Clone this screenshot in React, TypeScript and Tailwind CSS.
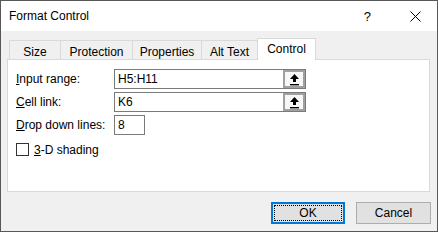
const font = { fontFamily: '"Liberation Sans", Arial, sans-serif' };

function RefButton() {
  return (
    <div className="flex h-full w-[22px] shrink-0 items-center justify-center border-2 border-[#a0a0a0] bg-[#f7f7f7]">
      <svg width="11" height="13" viewBox="0 0 11 13">
        <path d="M5.5 1 L10 6 L7 6 L7 9 L4 9 L4 6 L1 6 Z" fill="#000" />
        <rect x="1" y="11" width="9" height="1.4" fill="#000" />
      </svg>
    </div>
  );
}

function Tab({ label, first, selected }: { label: string; first?: boolean; selected?: boolean }) {
  if (selected) {
    return (
      <div className="relative z-10 -mb-px flex h-[22px] w-[59px] items-start justify-center border-x border-t border-[#d9d9d9] bg-white pt-[4px]">
        {label}
      </div>
    );
  }
  return (
    <div
      className={`mt-[2px] flex h-[19px] items-center justify-center border-t border-[#d9d9d9] pt-[3px] ${first ? "border-l" : "border-l"}`}
    >
      {label}
    </div>
  );
}

export default function App() {
  return (
    <div
      className="flex h-[232px] w-[438px] flex-col border border-[#575757] bg-[#f0f0f0] text-[12px] leading-none text-black"
      style={font}
    >
      {/* title bar */}
      <div className="flex h-[30px] shrink-0 items-center bg-white pl-[8px]">
        <span className="text-[12px]">Format Control</span>
        <span className="ml-auto mr-[39px] text-[13px]">?</span>
        <svg className="mr-[16px]" width="11" height="11" viewBox="0 0 11 11">
          <path d="M0.5 0.5 L10.5 10.5 M10.5 0.5 L0.5 10.5" stroke="#000" strokeWidth="1" />
        </svg>
      </div>

      <div className="flex flex-1 flex-col pl-[6px] pr-[6px] pt-[7px]">
        {/* tabs */}
        <div className="ml-[2px] flex">
          <div className="w-[51px]"><Tab label="Size" first /></div>
          <div className="w-[72px]"><Tab label="Protection" /></div>
          <div className="w-[69px]"><Tab label="Properties" /></div>
          <div className="w-[56px]"><Tab label="Alt Text" /></div>
          <Tab label="Control" selected />
        </div>

        {/* panel */}
        <div className="flex h-[133px] w-[423px] flex-col border border-[#d9d9d9] bg-white pl-[8px] pt-[9px]">
          <div className="flex flex-col gap-[3px]">
            <div className="flex h-[20px] items-center">
              <span className="w-[98px]"><u>I</u>nput range:</span>
              <div className="flex h-[20px] w-[192px] items-center border border-[#7a7a7a] pl-[3px]">
                <span className="flex-1">H5:H11</span>
                <RefButton />
              </div>
            </div>
            <div className="flex h-[20px] items-center">
              <span className="w-[98px]"><u>C</u>ell link:</span>
              <div className="flex h-[20px] w-[192px] items-center border border-[#7a7a7a] pl-[3px]">
                <span className="flex-1">K6</span>
                <RefButton />
              </div>
            </div>
            <div className="flex h-[20px] items-center">
              <span className="w-[98px]"><u>D</u>rop down lines:</span>
              <div className="flex h-[20px] w-[31px] items-center border border-[#7a7a7a] pl-[3px]">8</div>
            </div>
          </div>
          <div className="mt-[8px] flex items-center gap-[5px]">
            <div className="h-[13px] w-[13px] border border-[#333] bg-white" />
            <span><u>3</u>-D shading</span>
          </div>
        </div>

        {/* buttons */}
        <div className="mt-[10px] flex justify-end gap-[11px] pr-[0px]">
          <button className="relative flex h-[22px] w-[74px] items-center justify-center border-2 border-[#0078d7] bg-[#e1e1e1]">
            <div className="absolute inset-[1px] border border-dotted border-black" />
            OK
          </button>
          <button className="flex h-[22px] w-[75px] items-center justify-center border border-[#adadad] bg-[#e1e1e1]">
            Cancel
          </button>
        </div>
      </div>
    </div>
  );
}
